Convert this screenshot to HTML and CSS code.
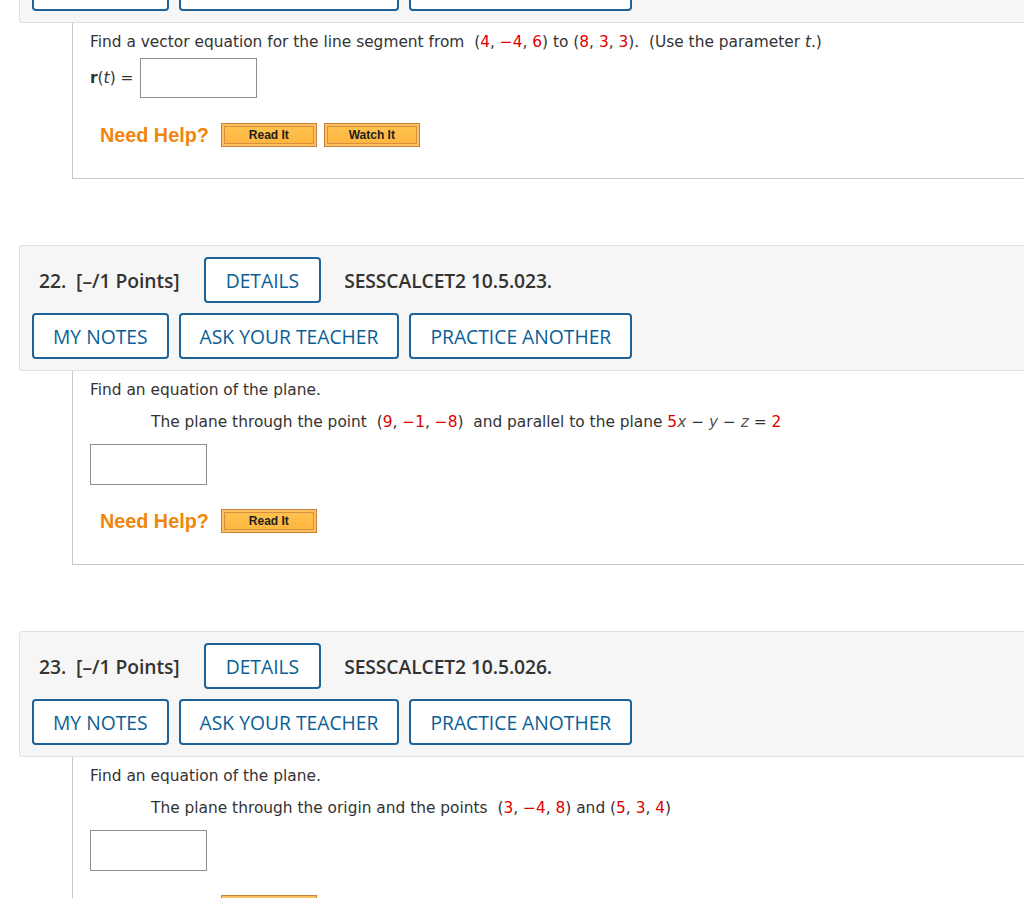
FILE: index.html
```html
<!DOCTYPE html>
<html>
<head>
<meta charset="utf-8">
<link rel="stylesheet" href="styles.css">
</head>
<body>
<div class="page">
  <div class="question">
    <div class="qhead">
      <div class="row">
        <span class="label">21.&nbsp; [–/1 Points]</span>
        <span class="btn">DETAILS</span>
        <span class="code">SESSCALCET2 10.5.012.</span>
      </div>
      <div class="row row2">
        <span class="btn">MY NOTES</span>
        <span class="btn">ASK YOUR TEACHER</span>
        <span class="btn">PRACTICE ANOTHER</span>
      </div>
    </div>
    <div class="qbody q21">
      <p class="txt">Find a vector equation for the line segment from&nbsp; (<span class="r">4</span>, <span class="r">−4</span>, <span class="r">6</span>) to (<span class="r">8</span>, <span class="r">3</span>, <span class="r">3</span>).&nbsp; (Use the parameter <i>t</i>.)</p>
      <div class="ansrow"><span class="rt"><b>r</b>(<i>t</i>) =</span><span class="inp inp1"></span></div>
      <div class="help"><span class="need">Need Help?</span><span class="hbtn">Read It</span><span class="hbtn">Watch It</span></div>
    </div>
  </div>

  <div class="question">
    <div class="qhead">
      <div class="row">
        <span class="label">22.&nbsp; [–/1 Points]</span>
        <span class="btn">DETAILS</span>
        <span class="code">SESSCALCET2 10.5.023.</span>
      </div>
      <div class="row row2">
        <span class="btn">MY NOTES</span>
        <span class="btn">ASK YOUR TEACHER</span>
        <span class="btn">PRACTICE ANOTHER</span>
      </div>
    </div>
    <div class="qbody">
      <p class="txt">Find an equation of the plane.</p>
      <p class="txt indent">The plane through the point&nbsp; (<span class="r">9</span>, <span class="r">−1</span>, <span class="r">−8</span>)&nbsp; and parallel to the plane <span class="r">5</span><i class="v">x</i> − <i class="v">y</i> − <i class="v">z</i> = <span class="r">2</span></p>
      <span class="inp inp2"></span>
      <div class="help"><span class="need">Need Help?</span><span class="hbtn">Read It</span></div>
    </div>
  </div>

  <div class="question">
    <div class="qhead">
      <div class="row">
        <span class="label">23.&nbsp; [–/1 Points]</span>
        <span class="btn">DETAILS</span>
        <span class="code">SESSCALCET2 10.5.026.</span>
      </div>
      <div class="row row2">
        <span class="btn">MY NOTES</span>
        <span class="btn">ASK YOUR TEACHER</span>
        <span class="btn">PRACTICE ANOTHER</span>
      </div>
    </div>
    <div class="qbody">
      <p class="txt">Find an equation of the plane.</p>
      <p class="txt indent">The plane through the origin and the points&nbsp; (<span class="r">3</span>, <span class="r">−4</span>, <span class="r">8</span>) and (<span class="r">5</span>, <span class="r">3</span>, <span class="r">4</span>)</p>
      <span class="inp inp2"></span>
      <div class="help"><span class="need">Need Help?</span><span class="hbtn">Read It</span></div>
    </div>
  </div>
</div>
</body>
</html>
```

FILE: styles.css
```css
html, body {
  margin: 0;
  padding: 0;
  overflow: hidden;
  background: #fff;
}
.page {
  margin-top: -103px;
  padding-left: 19px;
  width: 1100px;
}
.question {
  margin-bottom: 66px;
}
.qhead {
  background: #f6f6f6;
  border: 1px solid #e0e0e0;
  border-radius: 3px 0 0 3px;
  padding: 11px 12px;
  display: flex;
  flex-direction: column;
  gap: 10px;
  font-family: "Open Sans", "DejaVu Sans", sans-serif;
  font-size: 19.3px;
}
.row {
  display: flex;
  align-items: center;
  height: 46px;
}
.row2 {
  gap: 10px;
}
.label {
  font-weight: 600;
  color: #333;
  padding-left: 7px;
  margin-right: 24px;
  letter-spacing: -0.05px;
}
.code {
  font-weight: 600;
  color: #333;
  margin-left: 23px;
  letter-spacing: -0.1px;
}
.btn {
  box-sizing: border-box;
  height: 46px;
  display: flex;
  align-items: center;
  padding: 0 19px;
  border: 2px solid #1b6399;
  border-radius: 4px;
  background: #fff;
  color: #0b5e96;
}
.row .label + .btn {
  padding: 0 20px;
}
.qbody {
  margin-left: 53px;
  border-left: 1px solid #c8c8c8;
  border-bottom: 1px solid #c8c8c8;
  padding: 9px 0 31px 17px;
  font-family: "DejaVu Sans", Verdana, sans-serif;
  font-size: 15.4px;
  color: #333;
}
.txt {
  margin: 0;
  line-height: 20px;
}
.txt + .txt {
  margin-top: 12px;
}
.indent {
  margin-left: 61px;
}
.r {
  color: #e00000;
}
.v {
  color: #555;
}
.ansrow {
  display: flex;
  align-items: center;
  margin-top: 6px;
}
.rt {
  margin-right: 7px;
}
.inp {
  display: block;
  box-sizing: border-box;
  width: 117px;
  height: 41px;
  border: 1px solid #8e8e8e;
  background: #fff;
}
.inp1 {
  height: 40px;
}
.inp2 {
  margin-top: 12px;
  width: 117px;
}
.help {
  display: flex;
  align-items: center;
  margin-top: 24px;
  padding-left: 10px;
  gap: 7px;
}
.q21 .help {
  margin-top: 25px;
}
.need {
  font-family: "Liberation Sans", Arial, sans-serif;
  font-weight: bold;
  font-size: 19.8px;
  color: #f0860c;
  margin-right: 5px;
}
.hbtn {
  box-sizing: border-box;
  width: 96px;
  height: 24px;
  display: flex;
  align-items: center;
  justify-content: center;
  border: 1px solid #c9813a;
  background: linear-gradient(#ffc451, #fdb43e);
  box-shadow: inset 0 0 0 2px #fbc060, inset 0 0 0 3px #d98f42;
  font-family: "Liberation Sans", Arial, sans-serif;
  font-weight: bold;
  font-size: 12px;
  color: #1e1e1e;
}
```
